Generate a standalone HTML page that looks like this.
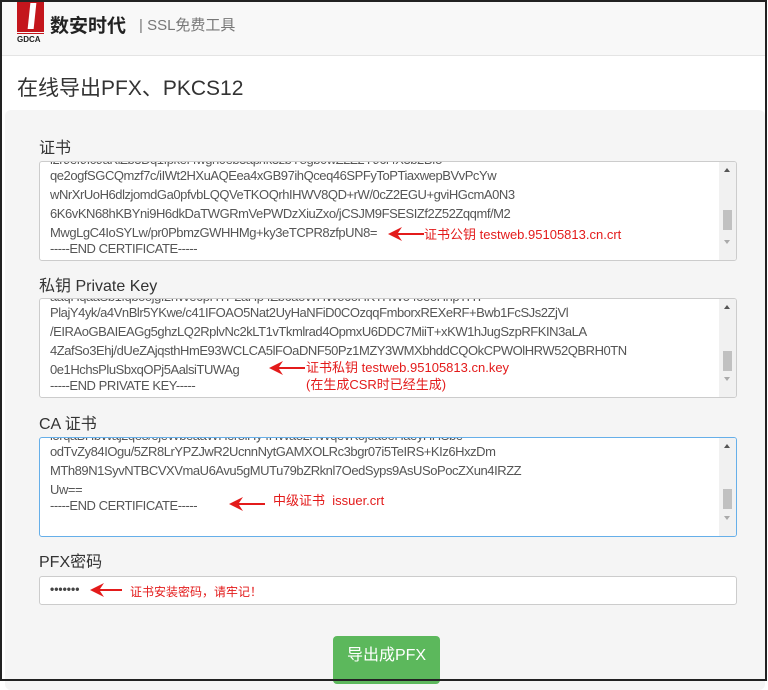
<!DOCTYPE html>
<html><head><meta charset="utf-8"><style>
*{box-sizing:border-box;margin:0;padding:0}
body{width:768px;height:681px;overflow:hidden;background:#fff;font-family:"Liberation Sans","Noto Sans CJK SC",sans-serif;position:relative;color:#333}
.frame{position:absolute;left:0;top:0;width:767px;height:681px;border:2px solid #222}
.hdr{position:absolute;left:2px;top:0;width:763px;height:56px;background:#f8f8f8;border-bottom:1px solid #e4e4e4}
.t{position:absolute;white-space:nowrap}
.panel{position:absolute;left:5px;top:110px;width:760px;height:580px;background:#f5f5f5;border-radius:6px}
.ta{position:absolute;left:39px;width:698px;height:100px;background:#fff;border:1px solid #ccc;border-radius:3px;overflow:hidden;font-size:13px;color:#555}
.ta .ln{position:absolute;left:10px;white-space:nowrap;letter-spacing:-0.45px}
.sb{position:absolute;right:0;top:0;width:17px;height:100%;background:#f1f1f1}
.sb .th{position:absolute;left:4px;width:9px;height:20px;background:#c1c1c1}
.sb .up{position:absolute;left:5px;top:6px;width:0;height:0;border-left:3px solid transparent;border-right:3px solid transparent;border-bottom:4px solid #555}
.sb .dn{position:absolute;left:5px;top:78px;width:0;height:0;border-left:3px solid transparent;border-right:3px solid transparent;border-top:4px solid #aaa}
.lbl{position:absolute;left:39px;font-size:16px;color:#333}
.red{color:#e31b1b;font-size:12px;position:absolute;white-space:nowrap}
.arr{position:absolute}
</style></head><body>
<div class="hdr">
 <div style="position:absolute;left:15px;top:0;width:27px;height:32px;background:#c4161c"></div>
 <div style="position:absolute;left:27px;top:3px;width:6px;height:26px;background:#fff;transform:skewX(-6deg)"></div>
 <div style="position:absolute;left:15px;top:33px;width:27px;height:1px;background:#c4161c"></div>
 <div class="t" style="left:15px;top:35px;font-size:8px;font-weight:bold;color:#222">GDCA</div>
 <div class="t" style="left:48px;top:11px;font-size:19px;font-weight:bold;color:#222">数安时代</div>
 <div class="t" style="left:137px;top:14px;font-size:15px;color:#777">| SSL免费工具</div>
</div>
<div class="t" style="left:17px;top:72px;font-size:21px;color:#333">在线导出PFX、PKCS12</div>
<div class="panel"></div>

<div class="lbl" style="top:134px">证书</div>
<div class="ta" style="top:161px">
 <div class="ln" style="top:-10px">l2r9ef9Ic9aKiZb3Dq1fpkeI4wgh0eb3ap/Ik3zbY8gb0wZ2Z2Y96l4X3b2Bf5</div>
 <div class="ln" style="top:6px">qe2ogfSGCQmzf7c/iIWt2HXuAQEea4xGB97ihQceq46SPFyToPTiaxwepBVvPcYw</div>
 <div class="ln" style="top:25px">wNrXrUoH6dlzjomdGa0pfvbLQQVeTKOQrhIHWV8QD+rW/0cZ2EGU+gviHGcmA0N3</div>
 <div class="ln" style="top:44px">6K6vKN68hKBYni9H6dkDaTWGRmVePWDzXiuZxo/jCSJM9FSESIZf2Z52Zqqmf/M2</div>
 <div class="ln" style="top:63px">MwgLgC4IoSYLw/pr0PbmzGWHHMg+ky3eTCPR8zfpUN8=</div>
 <div class="ln" style="top:79px">-----END CERTIFICATE-----</div>
 <div class="sb"><div class="up"></div><div class="th" style="top:48px"></div><div class="dn"></div></div>
</div>
<div class="red" style="left:424px;top:224px;font-size:13px">证书公钥 testweb.95105813.cn.crt</div>

<div class="lbl" style="top:272px">私钥 Private Key</div>
<div class="ta" style="top:298px">
 <div class="ln" style="top:-10px">aaqHqaaSb1fqboojgf2hWe6pHTP2aHp4Zb6aoWHWo6oHKTHWo4oeoHnpTHT</div>
 <div class="ln" style="top:6px">PlajY4yk/a4VnBlr5YKwe/c41IFOAO5Nat2UyHaNFiD0COzqqFmborxREXeRF+Bwb1FcSJs2ZjVl</div>
 <div class="ln" style="top:25px">/EIRAoGBAIEAGg5ghzLQ2RplvNc2kLT1vTkmlrad4OpmxU6DDC7MiiT+xKW1hJugSzpRFKIN3aLA</div>
 <div class="ln" style="top:44px">4ZafSo3Ehj/dUeZAjqsthHmE93WCLCA5lFOaDNF50Pz1MZY3WMXbhddCQOkCPWOlHRW52QBRH0TN</div>
 <div class="ln" style="top:63px">0e1HchsPluSbxqOPj5AalsiTUWAg</div>
 <div class="ln" style="top:79px">-----END PRIVATE KEY-----</div>
 <div class="sb"><div class="up"></div><div class="th" style="top:52px"></div><div class="dn"></div></div>
</div>
<div class="red" style="left:306px;top:357px;font-size:13px">证书私钥 testweb.95105813.cn.key</div>
<div class="red" style="left:306px;top:374px;font-size:13px">(在生成CSR时已经生成)</div>

<div class="lbl" style="top:410px">CA 证书</div>
<div class="ta" style="top:437px;border-color:#66afe9">
 <div class="ln" style="top:-10px">l5rqaBHbWaj2qe8/ejeWbeaaWHer8iHy4HWa82HWqevK5jeaoeHaeyHHSbe</div>
 <div class="ln" style="top:6px">odTvZy84IOgu/5ZR8LrYPZJwR2UcnnNytGAMXOLRc3bgr07i5TeIRS+KIz6HxzDm</div>
 <div class="ln" style="top:25px">MTh89N1SyvNTBCVXVmaU6Avu5gMUTu79bZRknl7OedSyps9AsUSoPocZXun4IRZZ</div>
 <div class="ln" style="top:44px">Uw==</div>
 <div class="ln" style="top:60px">-----END CERTIFICATE-----</div>
 <div class="sb"><div class="up"></div><div class="th" style="top:51px"></div><div class="dn"></div></div>
</div>
<div class="red" style="left:273px;top:490px;font-size:13px">中级证书&nbsp; issuer.crt</div>

<div class="lbl" style="top:548px">PFX密码</div>
<div style="position:absolute;left:39px;top:576px;width:698px;height:29px;background:#fff;border:1px solid #ccc;border-radius:3px"></div>
<div class="t" style="left:50px;top:582px;font-size:12px;font-weight:bold;color:#444">•••••••</div>
<div class="red" style="left:130px;top:583px">证书安装密码，请牢记！</div>

<svg class="arr" style="left:388px;top:227px" width="36" height="14"><path d="M0 7 L14 0 L10 6 L36 6 L36 8 L10 8 L14 14Z" fill="#e31b1b"/></svg>
<svg class="arr" style="left:269px;top:361px" width="36" height="14"><path d="M0 7 L14 0 L10 6 L36 6 L36 8 L10 8 L14 14Z" fill="#e31b1b"/></svg>
<svg class="arr" style="left:229px;top:497px" width="36" height="14"><path d="M0 7 L14 0 L10 6 L36 6 L36 8 L10 8 L14 14Z" fill="#e31b1b"/></svg>
<svg class="arr" style="left:90px;top:583px" width="32" height="14"><path d="M0 7 L14 0 L10 6 L32 6 L32 8 L10 8 L14 14Z" fill="#e31b1b"/></svg>

<div style="position:absolute;left:333px;top:636px;width:107px;height:48px;background:#5cb85c;border-radius:4px;color:#fff;font-size:16px;text-align:center;line-height:40px">导出成PFX</div>
<div class="frame"></div>
</body></html>
